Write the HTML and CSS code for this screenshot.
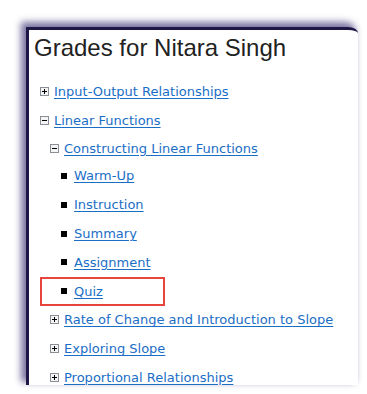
FILE: index.html
```html
<!DOCTYPE html>
<html>
<head>
<meta charset="utf-8">
<link rel="stylesheet" href="styles.css">
</head>
<body>
<div class="frame">
  <h1 class="title">Grades for Nitara Singh</h1>
  <ul class="tree">
    <li class="row l1"><svg class="tg" viewBox="0 0 9 9"><rect x="0.5" y="0.5" width="8" height="8" fill="#f4f4f4" stroke="#8a8f96"/><path d="M2 4.5h5M4.5 2v5" stroke="#000" stroke-width="1"/></svg><a href="#">Input-Output Relationships</a></li>
    <li class="row l1"><svg class="tg" viewBox="0 0 9 9"><rect x="0.5" y="0.5" width="8" height="8" fill="#f4f4f4" stroke="#8a8f96"/><path d="M2 4.5h5" stroke="#000" stroke-width="1"/></svg><a href="#">Linear Functions</a></li>
    <li class="row l2 r3"><svg class="tg" viewBox="0 0 9 9"><rect x="0.5" y="0.5" width="8" height="8" fill="#f4f4f4" stroke="#8a8f96"/><path d="M2 4.5h5" stroke="#000" stroke-width="1"/></svg><a href="#">Constructing Linear Functions</a></li>
    <li class="row l3"><span class="sq"></span><a href="#">Warm-Up</a></li>
    <li class="row l3"><span class="sq"></span><a href="#">Instruction</a></li>
    <li class="row l3"><span class="sq"></span><a href="#">Summary</a></li>
    <li class="row l3"><span class="sq"></span><a href="#">Assignment</a></li>
    <li class="row l3 hl"><span class="sq"></span><a href="#">Quiz</a></li>
    <li class="row l2"><svg class="tg" viewBox="0 0 9 9"><rect x="0.5" y="0.5" width="8" height="8" fill="#f4f4f4" stroke="#8a8f96"/><path d="M2 4.5h5M4.5 2v5" stroke="#000" stroke-width="1"/></svg><a href="#">Rate of Change and Introduction to Slope</a></li>
    <li class="row l2"><svg class="tg" viewBox="0 0 9 9"><rect x="0.5" y="0.5" width="8" height="8" fill="#f4f4f4" stroke="#8a8f96"/><path d="M2 4.5h5M4.5 2v5" stroke="#000" stroke-width="1"/></svg><a href="#">Exploring Slope</a></li>
    <li class="row l2"><svg class="tg" viewBox="0 0 9 9"><rect x="0.5" y="0.5" width="8" height="8" fill="#f4f4f4" stroke="#8a8f96"/><path d="M2 4.5h5M4.5 2v5" stroke="#000" stroke-width="1"/></svg><a href="#">Proportional Relationships</a></li>
  </ul>
</div>
</body>
</html>
```
FILE: styles.css
```css
html, body {
  margin: 0;
  padding: 0;
  background: #fff;
}
body {
  width: 367px;
  height: 394px;
  overflow: hidden;
  padding-top: 27px;
  padding-left: 26px;
  box-sizing: border-box;
}
.frame {
  width: 332px;
  height: 358px;
  border-top: 3px solid #1d1746;
  border-left: 3px solid #1d1746;
  border-top-right-radius: 10px 6px;
  box-shadow: -4px -4px 7px 1px rgba(50, 40, 110, 0.65);
  background: #fff;
  box-sizing: border-box;
  padding: 4px 0 0 5px;
}
.title {
  margin: 0;
  font-family: "Liberation Sans", Arial, sans-serif;
  font-weight: normal;
  font-size: 24px;
  line-height: 28px;
  color: #222;
}
.tree {
  list-style: none;
  margin: 15px 0 0 0;
  padding: 0;
  font-family: "DejaVu Sans", Verdana, sans-serif;
  font-size: 13px;
}
.row {
  height: 28.8px;
  display: flex;
  align-items: center;
  white-space: nowrap;
}
.r3 {
  height: 27px;
}
.row a {
  color: #1a6ec6;
  text-decoration: underline;
  text-underline-offset: 2px;
}
.tg {
  width: 9px;
  height: 9px;
  flex: none;
  margin-right: 5px;
}
.l1 { padding-left: 6px; }
.l2 { padding-left: 16px; }
.l3 { padding-left: 27px; }
.sq {
  width: 6px;
  height: 6px;
  background: #000;
  flex: none;
  margin-right: 7px;
}
.hl {
  margin-left: 6px;
  padding-left: 19px;
  width: 125px;
  box-sizing: border-box;
  border: 2px solid #e8453c;
}
```
